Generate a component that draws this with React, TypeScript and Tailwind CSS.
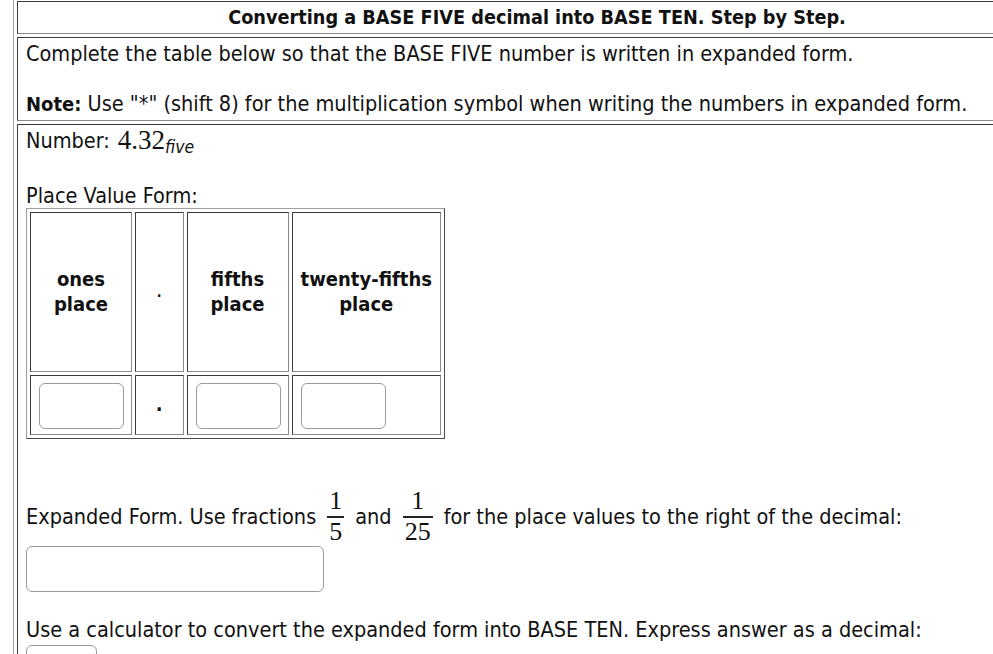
import React from 'react';

const cellBorder = 'border border-t-[#3a3a3a] border-l-[#3a3a3a] border-r-[#8a8a8a] border-b-[#8a8a8a]';
const tableBorder = 'border border-t-[#a0a0a0] border-l-[#a0a0a0] border-r-[#4a4a4a] border-b-[#4a4a4a]';

function Frac({ num, den }: { num: string; den: string }) {
  return (
    <span className="inline-flex flex-col items-center align-middle mx-[11px] font-['Liberation_Serif',serif] text-[26px] leading-[28px]">
      <span className="px-[2px] pb-[1px]">{num}</span>
      <span className="px-[2px] border-t-2 border-[#222] w-full text-center">{den}</span>
    </span>
  );
}

function Box({ w }: { w: string }) {
  return <input className={`${w} h-[46px] rounded-[6px] border border-[#9a9a9a] bg-white outline-none`} />;
}

function HeadCell({ w, children }: { w: string; children: React.ReactNode }) {
  return (
    <div className={`${w} h-[160px] ${cellBorder} flex items-center justify-center text-center font-bold text-[20px] leading-[25px]`}>
      {children}
    </div>
  );
}

function InputCell({ w, children }: { w: string; children: React.ReactNode }) {
  return <div className={`${w} h-[60px] ${cellBorder} pt-[7px] pl-[8px]`}>{children}</div>;
}

export default function App() {
  return (
    <div className="w-[993px] h-[654px] overflow-hidden bg-white text-[#111] font-['DejaVu_Sans_Condensed','DejaVu_Sans',sans-serif] text-[21.5px] leading-[25px]">
      <div className={`ml-[13px] -mt-[3px] w-[1048px] ${tableBorder} p-[3px] flex flex-col gap-[3px]`}>
        <div className={`h-[33px] ${cellBorder} flex items-center justify-center font-bold text-[19.7px]`}>
          Converting a BASE FIVE decimal into BASE TEN. Step by Step.
        </div>

        <div className={`h-[84px] ${cellBorder} px-[8px] pt-[3px]`}>
          <div>Complete the table below so that the BASE FIVE number is written in expanded form.</div>
          <div className="h-[25px]" />
          <div>
            <span className="font-bold text-[20px]">Note:</span> Use "*" (shift 8) for the multiplication symbol when writing the numbers in expanded form.
          </div>
        </div>

        <div className={`h-[600px] ${cellBorder} px-[8px] pt-[3px]`}>
          <div className="h-[30px] flex items-start">
            <span>Number:</span>
            <span className="ml-[8px] font-['Liberation_Serif',serif] text-[27px] leading-[25px]">4.32</span>
            <span className="italic text-[17.5px] leading-[16px] mt-[11px]">five</span>
          </div>
          <div className="h-[25px]" />
          <div>Place Value Form:</div>

          <div className={`w-[419px] ${tableBorder} border-t-[#8a8a8a] border-l-[#8a8a8a] p-[3px] flex flex-col gap-[3px]`}>
            <div className="flex gap-[3px]">
              <HeadCell w="w-[103px]">ones<br />place</HeadCell>
              <HeadCell w="w-[49px]"><span className="text-[14px]">.</span></HeadCell>
              <HeadCell w="w-[103px]">fifths<br />place</HeadCell>
              <HeadCell w="w-[151px]">twenty-fifths<br />place</HeadCell>
            </div>
            <div className="flex gap-[3px]">
              <InputCell w="w-[103px]"><Box w="w-[85px]" /></InputCell>
              <div className={`w-[49px] h-[60px] ${cellBorder} flex justify-center pt-[16px] font-bold text-[20px]`}>.</div>
              <InputCell w="w-[103px]"><Box w="w-[85px]" /></InputCell>
              <InputCell w="w-[151px]"><Box w="w-[85px]" /></InputCell>
            </div>
          </div>

          <div className="h-[48px]" />
          <div className="h-[59px] flex items-center">
            <span>Expanded Form. Use fractions</span>
            <Frac num="1" den="5" />
            <span>and</span>
            <Frac num="1" den="25" />
            <span>for the place values to the right of the decimal:</span>
          </div>
          <Box w="w-[298px] block" />
          <div className="h-[25px]" />
          <div>Use a calculator to convert the expanded form into BASE TEN. Express answer as a decimal:</div>
          <div className="mt-[3px]"><Box w="w-[71px]" /></div>
        </div>
      </div>
    </div>
  );
}
